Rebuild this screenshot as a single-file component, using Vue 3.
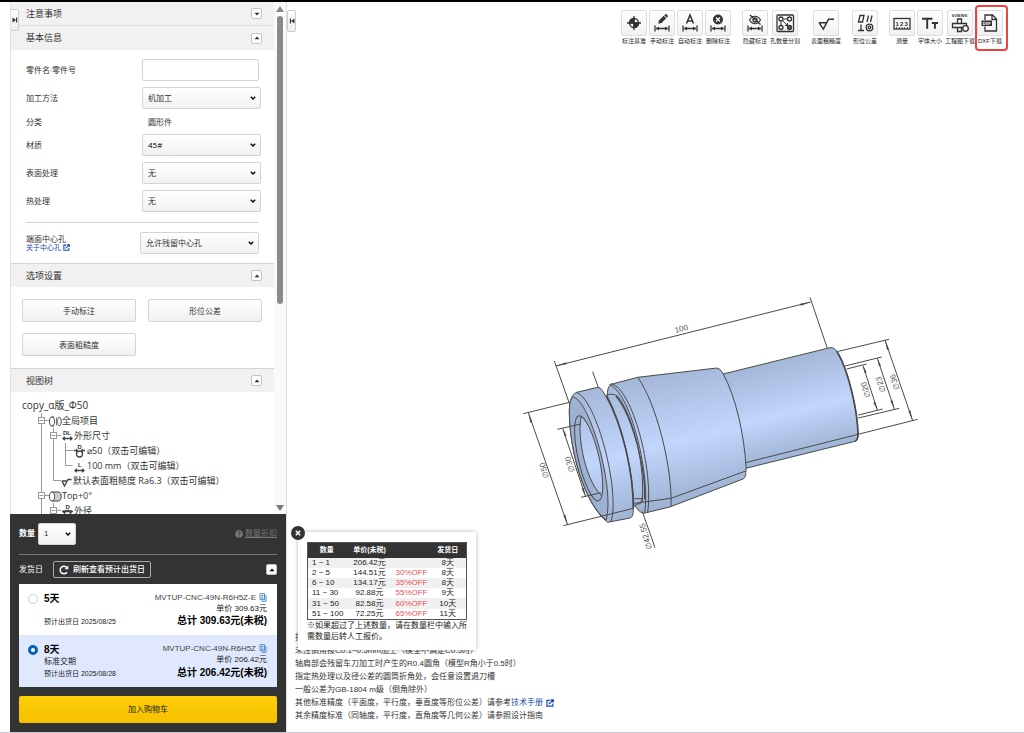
<script setup>
import { ref } from 'vue'

const part = ref('')
const method = ref('机加工')
const material = ref('45#')
const surface = ref('无')
const heat = ref('无')
const centerHole = ref('允许残留中心孔')
const qty = ref('1')
const delivery = ref('8')

const selects = [
  { id: 'material', label: '材质', model: material, dark: true },
  { id: 'surface', label: '表面处理', model: surface },
  { id: 'heat', label: '热处理', model: heat }
]

const toolGroups = [
  [
    { icon: 'datum', label: '标注基准' },
    { icon: 'pencil', label: '手动标注' },
    { icon: 'auto', label: '自动标注' },
    { icon: 'remove', label: '删除标注' }
  ],
  [
    { icon: 'hide', label: '隐藏标注' },
    { icon: 'holes', label: '孔数量分割' }
  ],
  [{ icon: 'rough', label: '表面粗糙度' }],
  [{ icon: 'geo', label: '形位公差' }],
  [
    { icon: 'measure', label: '测量' },
    { icon: 'font', label: '字体大小' },
    { icon: 'views', label: '工程图下载' },
    { icon: 'dxf', label: 'DXF下载', marked: true }
  ]
]

const tree = [
  { kind: 'global', gutter: 40, text: '全局项目' },
  { kind: 'size', gutter: 52, text: '外形尺寸' },
  { kind: 'dia', gutter: 65, text: '⌀50（双击可编辑）' },
  { kind: 'len', gutter: 65, text: '100 mm（双击可编辑）' },
  { kind: 'ra', gutter: 51, text: '默认表面粗糙度 Ra6.3（双击可编辑）' },
  { kind: 'top', gutter: 40, text: 'Top+0°' },
  { kind: 'outer', gutter: 52, text: '外径' }
]

const plans = [
  { id: '5', days: '5天', note: '', date: '2025/08/25', code: 'MVTUP-CNC-49N-R6H5Z-E', price: '309.63' },
  { id: '8', days: '8天', note: '标准交期', date: '2025/08/28', code: 'MVTUP-CNC-49N-R6H5Z', price: '206.42' }
]

const discounts = [
  ['1 ~ 1', '206.42元', '', '8天'],
  ['2 ~ 5', '144.51元', '30%OFF', '8天'],
  ['6 ~ 10', '134.17元', '35%OFF', '8天'],
  ['11 ~ 30', '92.88元', '55%OFF', '9天'],
  ['31 ~ 50', '82.58元', '60%OFF', '10天'],
  ['51 ~ 100', '72.25元', '65%OFF', '11天']
]
</script>

<template>
  <div class="page">
    <aside class="side">
      <div class="scroller">
        <div class="panels">
          <button class="edge-tab left" aria-label="展开">
            <svg viewBox="0 0 8 8" width="8" height="8"><path d="M1.5 1.5v5L5 4zM5 1.5h1.2v5H5z" fill="#333" /></svg>
          </button>
          <section>
            <h2 class="head"><span>注意事项</span>
              <button class="fold" aria-label="展开注意事项"><svg viewBox="0 0 8 8" width="8" height="8"><path d="M1.5 2.8h5L4 5.4z" fill="#333" /></svg></button>
            </h2>
          </section>
          <section>
            <h2 class="head"><span>基本信息</span>
              <button class="fold" aria-label="收起基本信息"><svg viewBox="0 0 8 8" width="8" height="8"><path d="M1.5 5.2h5L4 2.6z" fill="#333" /></svg></button>
            </h2>
            <div class="form">
              <div class="row">
                <label for="part">零件名·零件号</label>
                <input id="part" v-model="part" class="box text" type="text" />
              </div>
              <div class="row">
                <label for="method">加工方法</label>
                <span class="pick">
                  <select id="method" v-model="method" class="box"><option>机加工</option></select>
                  <svg viewBox="0 0 6 4" width="6" height="4"><path d="M.8.8 3 3 5.2.8" fill="none" stroke="#111" stroke-width="1.5" /></svg>
                </span>
              </div>
              <div class="row plain"><span class="name">分类</span><span class="value">圆形件</span></div>
              <div v-for="s in selects" :key="s.id" class="row">
                <label :for="s.id">{{ s.label }}</label>
                <span class="pick">
                  <select :id="s.id" class="box" :class="{ dark: s.dark }"><option>{{ s.model.value }}</option></select>
                  <svg viewBox="0 0 6 4" width="6" height="4"><path d="M.8.8 3 3 5.2.8" fill="none" stroke="#111" stroke-width="1.5" /></svg>
                </span>
              </div>
              <hr />
              <div class="row hole">
                <div class="stack">
                  <label for="hole">端面中心孔</label>
                  <a href="#">关于中心孔
                    <svg viewBox="0 0 8 8" width="7" height="7"><path d="M3.8 1.3H1v5.9h5.8V4.6M3 5l3.8-3.8M4.6.8h2.7v2.7" fill="none" stroke="currentColor" stroke-width="1.2" /></svg>
                  </a>
                </div>
                <span class="pick">
                  <select id="hole" v-model="centerHole" class="box"><option>允许残留中心孔</option></select>
                  <svg viewBox="0 0 6 4" width="6" height="4"><path d="M.8.8 3 3 5.2.8" fill="none" stroke="#111" stroke-width="1.5" /></svg>
                </span>
              </div>
            </div>
          </section>
          <section>
            <h2 class="head ruled"><span>选项设置</span>
              <button class="fold" aria-label="收起选项设置"><svg viewBox="0 0 8 8" width="8" height="8"><path d="M1.5 5.2h5L4 2.6z" fill="#333" /></svg></button>
            </h2>
            <div class="options">
              <button>手动标注</button>
              <button>形位公差</button>
              <button>表面粗糙度</button>
            </div>
          </section>
          <section>
            <h2 class="head ruled"><span>视图树</span>
              <button class="fold" aria-label="收起视图树"><svg viewBox="0 0 8 8" width="8" height="8"><path d="M1.5 5.2h5L4 2.6z" fill="#333" /></svg></button>
            </h2>
            <div class="tree">
              <p class="tree-name">copy_α版_Φ50</p>
              <ul>
                <li v-for="n in tree" :key="n.kind">
                  <svg :width="n.gutter" height="15" :viewBox="`22 0 ${n.gutter} 15`" fill="none" stroke="#444" stroke-width="1">
                    <g stroke="#999">
                      <path d="M41.5 0v15" />
                      <g v-if="n.kind === 'global' || n.kind === 'top'">
                        <path d="M45 7.5h4" /><rect x="38.5" y="4.5" width="6" height="6" fill="#fff" /><path d="M39.5 7.5h4" />
                      </g>
                      <g v-if="n.kind === 'size' || n.kind === 'outer'">
                        <path d="M53.5 0v15M57 7.5h4" /><rect x="50.5" y="4.5" width="6" height="6" fill="#fff" /><path d="M51.5 7.5h4" />
                      </g>
                      <path v-if="n.kind === 'dia'" d="M53.5 0v15M65.5 0v15M65.5 7.5h8" />
                      <path v-if="n.kind === 'len'" d="M53.5 0v15M65.5 0v7.5h7" />
                      <path v-if="n.kind === 'ra'" d="M53.5 0v7.5h8" />
                    </g>
                    <g v-if="n.kind === 'global'">
                      <ellipse cx="52" cy="8.5" rx="2.5" ry="4.5" /><path d="M52 4h2M52 13h2M59 4c3 1 3 8 0 9" />
                      <path d="M56.5 4.5v8M59 4c-2 2-2 7 0 9" stroke="#777" />
                    </g>
                    <g v-if="n.kind === 'top'">
                      <path d="M52 4h7c3 1 3 8 0 9h-7z" fill="#ccc" /><ellipse cx="52" cy="8.5" rx="2.5" ry="4.5" fill="#fff" />
                    </g>
                    <g v-if="n.kind === 'size'">
                      <path d="M63 10.5h9M64.8 8.7 63 10.5l1.8 1.8M70.2 8.7l1.8 1.8-1.8 1.8" stroke-width="1.3" />
                      <text x="63" y="7">DL</text>
                    </g>
                    <g v-if="n.kind === 'dia'">
                      <circle cx="79.5" cy="11" r="3" stroke-width="1.3" /><path d="M74 7.5h3M82 7.500h3" stroke-width="1.3" /><path d="m76 6 2 1.500-2 1.500M83 6l-2 1.500 2 1.500" />
                      <text x="77.500" y="6">D</text>
                    </g>
                    <g v-if="n.kind === 'len'">
                      <path d="M75 12.500h9M76.800 10.700 75 12.500l1.800 1.800M82.200 10.700l1.800 1.800-1.800 1.800" stroke-width="1.300" />
                      <text x="78" y="9">L</text>
                    </g>
                    <path v-if="n.kind === 'ra'" d="m62 8 2.500 5L68 6.500h3.500M62 8h4.500" stroke-width="1.300" />
                    <g v-if="n.kind === 'outer'">
                      <circle cx="67.500" cy="10.500" r="3" stroke-width="1.300" /><path d="M62 8.500h11M64 7v3M71 7v3" stroke-width="1.300" />
                      <text x="65.500" y="6">D</text>
                    </g>
                  </svg>
                  <span>{{ n.text }}</span>
                </li>
              </ul>
            </div>
          </section>
        </div>
        <div class="bar" aria-hidden="true">
          <svg viewBox="0 0 8 6" width="8" height="6"><path d="M4 0 8 6H0z" fill="#888" /></svg>
          <i></i>
          <svg viewBox="0 0 8 6" width="8" height="6"><path d="M4 6 8 0H0z" fill="#777" /></svg>
        </div>
      </div>

      <div class="order">
        <div class="qty">
          <label for="qty">数量</label>
          <span class="pick small">
            <select id="qty" v-model="qty" class="box"><option>1</option></select>
            <svg viewBox="0 0 6 4" width="6" height="4"><path d="M.8.8 3 3 5.2.8" fill="none" stroke="#111" stroke-width="1.5" /></svg>
          </span>
          <a href="#" class="rebate">
            <svg viewBox="0 0 8 8" width="8" height="8"><circle cx="4" cy="4" r="3.8" fill="#777" /><path d="M2.9 3.1c0-1.6 2.4-1.5 2.3 0C5.2 4 4 4 4 5M4 5.7v.9" fill="none" stroke="#333" stroke-width=".9" /></svg>
            <span>数量折扣</span>
          </a>
        </div>
        <div class="ship">
          <span>发货日</span>
          <button class="refresh">
            <svg viewBox="0 0 10 10" width="10" height="10"><path d="M8 7.3A3.8 3.8 0 1 1 7.7 2.4" fill="none" stroke="#fff" stroke-width="1.5" /><path d="M9.3.5v3.8H5.5z" fill="#fff" /></svg>
            刷新查看预计出货日
          </button>
          <button class="fold" aria-label="收起发货日"><svg viewBox="0 0 8 8" width="8" height="8"><path d="M1.5 5.2h5L4 2.6z" fill="#000" /></svg></button>
        </div>
        <div class="plans">
          <label v-for="p in plans" :key="p.id" class="plan" :class="{ on: delivery === p.id }">
            <input v-model="delivery" type="radio" name="delivery" :value="p.id" />
            <span class="when">
              <b>{{ p.days }}</b>
              <span v-if="p.note" class="std">{{ p.note }}</span>
              <small>预计出货日 {{ p.date }}</small>
            </span>
            <span class="cost">
              <span class="code">{{ p.code }}
                <svg viewBox="0 0 8 9" width="8" height="9"><path d="M1 .7h4.5v6H1zM2.3 2.500h2M2.300 4h2M2.300 5.300h2M7 2v6.300H2.500" fill="none" stroke="#3b82c4" stroke-width=".9" /></svg>
              </span>
              <span>单价 {{ p.price }}元</span>
              <b>总计 {{ p.price }}元(未税)</b>
            </span>
          </label>
        </div>
        <button class="cart">加入购物车</button>
      </div>
    </aside>

    <main class="stage">
      <header class="tools">
        <button class="edge-tab" aria-label="收起侧栏">
          <svg viewBox="0 0 8 8" width="8" height="8"><path d="M6.5 1.5v5L3 4zM1.8 1.5H3v5H1.8z" fill="#333" /></svg>
        </button>
        <div v-for="(g, i) in toolGroups" :key="i" class="group">
          <button v-for="t in g" :key="t.icon" class="tool" :class="{ marked: t.marked }">
            <span class="tile">
              <svg viewBox="0 0 26 26" width="26" height="26" fill="none" stroke="#333" stroke-width="1.3">
                <g v-if="t.icon === 'datum'">
                  <circle cx="13" cy="13" r="4.5" fill="#fff" /><path d="M13 6v14M6 13h14" />
                  <path d="M13 13V8.5A4.5 4.5 0 0 0 8.5 13zM13 13v4.5a4.5 4.5 0 0 0 4.5-4.5z" fill="#333" />
                </g>
                <g v-if="['pencil', 'auto', 'remove', 'hide'].includes(t.icon)">
                  <path d="M6 15.5v6M20 15.5v6M7 18.5h12" /><path d="m10 16.5-3 2 3 2zM16 16.5l3 2-3 2z" fill="#333" stroke="none" />
                </g>
                <path v-if="t.icon === 'pencil'" d="m9.200 13.800.8-3.300 4.700-4.700 2.500 2.500-4.700 4.700zM15.300 5.200l.9-.9q.6-.5 1.200 0l1.300 1.300q.5.600 0 1.200l-.9.9z" fill="#333" stroke="none" />
                <path v-if="t.icon === 'auto'" d="M9.500 13.500 13 5l3.500 8.500M10.700 11h4.600" stroke-width="1.500" />
                <g v-if="t.icon === 'remove'"><circle cx="13" cy="9.500" r="5" fill="#333" stroke="none" /><path d="m11 7.500 4 4m0-4-4 4" stroke="#fff" /></g>
                <g v-if="t.icon === 'hide'"><path d="M7.500 10c3-5 8-5 11 0-3 5-8 5-11 0zM8 5l10.500 9.500" stroke-width="1.200" /><circle cx="13" cy="10" r="2" /></g>
                <g v-if="t.icon === 'holes'">
                  <rect x="5" y="5" width="16.500" height="16.500" rx="1" /><circle cx="9" cy="9" r="2" /><circle cx="17.500" cy="9" r="2" /><circle cx="9" cy="17.500" r="2" /><circle cx="17.500" cy="17.500" r="2" fill="#666" />
                  <path d="M11.500 9h3.500M9 11.500V15M11 11l4.500 4.500M13 15.500h2.500V13" stroke-width="1" />
                </g>
                <path v-if="t.icon === 'rough'" d="m6 12.700 4.300 6.500 5.200-9.900H21M6 12.700h7.500" stroke-width="1.400" />
                <g v-if="t.icon === 'geo'">
                  <path d="M8 5.500h4L10.500 12H6.500zM15 12l1.500-6.500M18.500 12 20 5.500M6 20.500h6M9 14.500v6" /><circle cx="17.500" cy="17.500" r="3.300" /><circle cx="17.500" cy="17.500" r="1.300" />
                </g>
                <g v-if="t.icon === 'measure'">
                  <rect x="5" y="8.500" width="16" height="10.500" /><path d="M7.500 19v-2M10.300 19v-2M13 19v-2M15.700 19v-2M18.500 19v-2" stroke-width=".8" />
                  <text x="6.500" y="15.500" font-size="6">1</text><text x="11" y="15.500" font-size="6">2</text><text x="15.500" y="15.500" font-size="6">3</text>
                </g>
                <g v-if="t.icon === 'font'" stroke-width="1.900"><path d="M5 8.800h10.500M10.200 8.800v10M14.800 13h6.200M17.900 13v5.800" /></g>
                <g v-if="t.icon === 'views'">
                  <path d="M10.500 9h4v4.500h5v4h-5v4h-4v-4h-5v-4h5zM10.500 13.500h4M10.500 17.500h4" /><circle cx="18.500" cy="18.500" r="2.800" fill="#f7f7f7" />
                  <text x="5" y="7" font-size="4">6VIEWS</text>
                </g>
                <g v-if="t.icon === 'dxf'">
                  <path d="M8 10V5h7.500l4 4v12H8v-4.500M15 5v4.500h4.500" /><rect x="4.500" y="10.500" width="10.500" height="5.500" fill="#333" stroke="none" />
                  <text x="5.700" y="15" font-size="4" class="inv">DXF</text>
                </g>
              </svg>
            </span>
            <span class="cap">{{ t.label }}</span>
          </button>
        </div>
      </header>

      <svg class="model" viewBox="-684 -720 2211 1743" fill="none" stroke="#4a4a48" stroke-width="3" stroke-linejoin="round">
        <defs>
          <linearGradient id="gTube" gradientUnits="userSpaceOnUse" x1="790" y1="213" x2="860" y2="495">
            <stop offset="0" stop-color="#a3b7d9" /><stop offset=".55" stop-color="#c2d6fd" /><stop offset="1" stop-color="#9fb3d4" />
          </linearGradient>
          <linearGradient id="gCone" gradientUnits="userSpaceOnUse" x1="470" y1="245" x2="560" y2="615">
            <stop offset="0" stop-color="#a5b8da" /><stop offset=".55" stop-color="#c2d6fd" /><stop offset="1" stop-color="#9fb3d4" />
          </linearGradient>
          <linearGradient id="gRing" gradientUnits="userSpaceOnUse" x1="225" y1="295" x2="320" y2="690">
            <stop offset="0" stop-color="#a5b8da" /><stop offset=".55" stop-color="#c2d6fd" /><stop offset="1" stop-color="#9fb3d4" />
          </linearGradient>
          <clipPath id="bore"><ellipse cx="221" cy="505" rx="31" ry="131" transform="rotate(-13 221 505)" /></clipPath>
        </defs>
        <path d="M600 258 945 173q12-2 20 10c35 55 63 180 64 250 0 12-3 19-9 21L692 535z" fill="url(#gTube)" />
        <path d="M965 183c35 55 63 180 64 250 0 12-3 19-9 21" stroke-width="5" />
        <path d="M368 262 605 234q10 0 18 15c40 70 65 190 70 280 0 20 0 34-9 38L467 650 340 500z" fill="url(#gCone)" />
        <path d="M277 315c0-20 5-31 18-34l73-19c55 75 105 270 100 388l-82 20c-12-3-22-15-28-26z" fill="url(#gCone)" />
        <path d="M282 284c60 15 125 260 107 384M288 281c65 15 128 260 110 386" />
        <path d="M275 315c20-6 35 0 45 20 45 80 68 200 62 298l-24 15z" fill="url(#gRing)" />
        <path d="M303 318c50 60 90 220 86 310" stroke-width="4" />
        <path d="M358 626h24q0 12-10 18" />
        <path d="m185 307 63-15q8 0 14 10c55 80 97 250 93 355 0 15-2 24-10 27l-67 13C215 650 165 500 163 370c0-35 5-55 22-63z" fill="url(#gRing)" />
        <path d="M275 318c48 90 80 230 80 338" stroke-width="5" />
        <path d="M163 370c0-30 3-47 13-48 48 10 125 275 97 368C210 640 165 490 163 370z" fill="#9db1d2" />
        <path d="M184 307c62 22 132 300 104 388" />
        <path d="M200 375c-18 60 15 215 68 248l40-100-80-160z" clip-path="url(#bore)" fill="url(#gRing)" />
        <ellipse cx="221" cy="505" rx="31" ry="131" transform="rotate(-13 221 505)" />
        <path d="m358 640 110-15 224-82M692 518l337-85" />
        <g class="dims">
          <path d="m118 213 45 127M122 228 887 36M885 22l52 153M233 245l17 48" />
          <path d="m25 371 138-34M40 368l118 337M145 707l210-52" />
          <path d="m127 418 70-16M143 415l69 205M198 622l60-14" />
          <path d="m382 665 38 108" />
          <path d="m970 184 152-36M1110 150l83 242M1029 433l179-45" />
          <path d="m990 228 110-27M1087 205l51 152M1030 384l123-29" />
          <path d="m995 237 60-15M1044 227l43 133M1030 375l73-18" />
        </g>
        <g fill="#4a4a48" stroke="none">
          <path d="m122 228 31-11 2 6zM887 36l-31 5 2 6zM40 368l6 30 6-2zM158 705l-13-29 6-2zM143 415l6 24 6-2zM212 620l-12-24 6-2zM1110 150l6 30 6-2zM1193 392l-13-29 6-2zM1087 205l5 24 6-2zM1138 357l-12-24 6-2zM1044 227l5 22 6-2zM1087 360l-12-22 6-2z" />
        </g>
        <g class="marks">
          <text transform="translate(501 124) rotate(-14)">100</text>
          <text transform="translate(95 539) rotate(-107)">∅50</text>
          <text transform="translate(172 521) rotate(-107)">∅30</text>
          <text transform="translate(400 737) rotate(-107)">∅42.55</text>
          <text transform="translate(1060 297) rotate(-107)">∅20</text>
          <text transform="translate(1105 281) rotate(-107)">∅23</text>
          <text transform="translate(1147 274) rotate(-107)">∅36</text>
        </g>
      </svg>

      <div class="foot">
        <div class="notes">
          <p>指定</p>
          <p>未注倒角按C0.1~0.5mm加工（模型不满足C0.5时）</p>
          <p>轴肩部会残留车刀加工时产生的R0.4圆角（模型R角小于0.5时）</p>
          <p>指定热处理以及径公差的圆筒折角处，会任意设置退刀槽</p>
          <p>一般公差为GB-1804 m级（倒角除外）</p>
          <p>其他标准精度（平面度，平行度，垂直度等形位公差）请参考<a href="#">技术手册
            <svg viewBox="0 0 8 8" width="8" height="8"><path d="M3.8 1.3H1v5.9h5.800V4.600M3 5l3.800-3.800M4.600.8h2.700v2.700" fill="none" stroke="currentColor" stroke-width="1.200" /></svg></a></p>
          <p>其余精度标准（同轴度，平行度，直角度等几何公差）请参照设计指南</p>
        </div>
        <div class="popup">
          <button class="close" aria-label="关闭"><svg viewBox="0 0 14 14" width="14" height="14"><circle cx="7" cy="7" r="7" fill="#333" /><path d="m4.800 4.800 4.400 4.400m0-4.400L4.800 9.200" stroke="#fff" stroke-width="1.500" /></svg></button>
          <table>
            <thead><tr><th>数量</th><th>单价(未税)</th><th></th><th>发货日</th></tr></thead>
            <tbody>
              <tr v-for="d in discounts" :key="d[0]"><td>{{ d[0] }}</td><td>{{ d[1] }}</td><td class="off">{{ d[2] }}</td><td>{{ d[3] }}</td></tr>
            </tbody>
          </table>
          <p>※如果超过了上述数量，请在数量栏中输入所需数量后转人工报价。</p>
        </div>
      </div>
    </main>
  </div>
</template>

<style>
body { background: #fff; }
</style>

<style scoped>
* { box-sizing: border-box; margin: 0; padding: 0; }
.page {
  display: grid;
  grid-template-columns: 277px 1fr;
  height: 100vh;
  padding-left: 10px;
  border-top: 2px solid #000;
  border-bottom: 1px solid #c6c9d2;
  font: 8px/12px "Liberation Sans", "Noto Sans CJK SC", sans-serif;
  color: #333;
}
button, input, select { font: inherit; color: inherit; border: 0; background: none; }
svg { display: block; flex: none; }
a { color: #1347b0; }
.side { display: flex; flex-direction: column; min-height: 0; border-right: 1px solid #ddd; }
.scroller { display: flex; flex: 1; min-height: 0; overflow: hidden; border-left: 1px solid #e2e2e2; font-family: "Open Sans", "Noto Sans CJK SC", sans-serif; }
.panels { position: relative; flex: 1; overflow: hidden; }
.edge-tab {
  display: flex; align-items: center; justify-content: center;
  width: 9px; height: 22px; margin-right: auto;
  border: 1px solid #ccc; border-radius: 2px;
  background: linear-gradient(#fff, #eee);
}
.edge-tab.left { position: absolute; left: -1px; top: 7px; }
.head {
  display: flex; align-items: center; justify-content: space-between;
  height: 24px; padding: 0 12px 0 15px;
  background: #f1f1f1; border-bottom: 1px solid #ddd;
  font-size: 9px; font-weight: 400;
}
.head.ruled { border-top: 1px solid #d4d4d4; border-bottom: 0; }
.form { padding: 9px 15px 9px; }
section:nth-of-type(2) .head { border-bottom: 0; }
.fold {
  display: flex; align-items: center; justify-content: center;
  width: 11px; height: 11px;
  border: 1px solid #c4c4c4; border-radius: 2px; background: #fff;
}
.row { display: flex; align-items: center; margin-bottom: 6px; }
.row > label, .name { width: 116px; flex: none; }
.row.plain { height: 13px; }
.value { padding-left: 6px; }
.box {
  height: 22px; width: 100%; padding: 0 5px;
  border: 1px solid #d4d4d4; border-radius: 2px;
  background: linear-gradient(#fff, #f1f1f1);
  appearance: none;
}
.box.text { width: 117px; background: #fff; }
.box.dark { color: #000; }
.pick { display: grid; flex: none; width: 119px; align-items: center; }
.pick > * { grid-area: 1 / 1; }
.pick > svg { justify-self: end; margin-right: 5px; pointer-events: none; }
hr { border: 0; border-top: 1px solid #d4d4d4; margin: 10px 0 9px; }
.row.hole { margin: 0; }
.stack { display: flex; flex-direction: column; width: 114px; line-height: 9px; }
.stack a { display: flex; gap: 2px; align-items: center; font-size: 7px; text-decoration: none; }
.options { display: grid; grid-template-columns: 1fr 1fr; gap: 11px 12px; padding: 12px 12px 12px 11px; }
.options button { height: 23px; border: 1px solid #d4d4d4; border-radius: 2px; background: linear-gradient(#fff, #f1f1f1); }
.tree { padding: 6px 0 0 11px; }
.tree-name { font-size: 10px; line-height: 15px; }
.tree ul { list-style: none; }
.tree li { display: flex; height: 15px; font-size: 9px; line-height: 15px; white-space: nowrap; }
.tree text { font: bold 6px "Liberation Sans", sans-serif; fill: #333; stroke: none; }
.bar { display: flex; flex-direction: column; align-items: center; width: 12px; padding: 4px 0 3px; background: #fafafa; }
.bar i { width: 6px; height: 57%; margin: 4px 0 auto; border-radius: 3px; background: #8a8a8a; }

.order { padding: 9px; background: #333; color: #fff; }
.qty { display: flex; align-items: center; gap: 3px; padding-bottom: 9px; border-bottom: 1px solid #777; }
.qty label { font-weight: 700; }
.pick.small { width: 38px; color: #333; }
.rebate { display: flex; align-items: center; gap: 2px; margin-left: auto; color: #777; }
.ship { display: flex; align-items: center; padding: 6px 0; }
.refresh {
  display: flex; align-items: center; gap: 4px;
  height: 17px; margin: 0 auto 0 10px; padding: 0 5px;
  border: 1px solid #aaa; border-radius: 2px; font-weight: 500;
}
.plan {
  display: flex; min-height: 51px; padding: 8px 10px 7px 9px;
  background: #fff; color: #222;
}
.plan.on { min-height: 52px; background: #dfe8fd; }
.plan input { appearance: none; width: 10px; height: 10px; margin: 2px 6px 0 0; border: 1px solid #ccc; border-radius: 50%; background: #fff; }
.plan input:checked { border: 3px solid #0860b8; }
.when, .cost { display: flex; flex-direction: column; line-height: 11px; }
.when b { font-size: 10px; line-height: 13px; color: #000; }
.when small { margin-top: auto; font-size: 7px; line-height: 12px; }
.cost { margin-left: auto; align-items: flex-end; }
.cost b { margin-top: auto; font-size: 10px; line-height: 14px; color: #000; }
.code { display: flex; align-items: center; gap: 3px; color: #444; }
.cart { display: block; width: 100%; height: 27px; margin-top: 9px; border-radius: 2px; background: linear-gradient(#ffce08, #f5c000); color: #222; }

.stage { display: flex; flex-direction: column; min-width: 0; min-height: 0; }
.tools { display: flex; gap: 11px; align-items: flex-start; height: 48px; padding: 8px 21px 0 0; }
.group { display: flex; gap: 2px; }
.tool { position: relative; display: flex; flex-direction: column; align-items: center; }
.tile { width: 26px; height: 26px; border: 1px solid #ddd; border-radius: 2px; background: linear-gradient(#fff, #f1f1f1); }
.tile svg { margin: -1px; }
.tile text { font-family: "Liberation Sans", sans-serif; font-weight: 700; fill: #333; stroke: none; }
.tile .inv { fill: #fff; }
.cap { font-size: 6px; line-height: 10px; white-space: nowrap; color: #222; }
.marked::after { content: ""; position: absolute; inset: -5px -5px -5px -2px; border: 2px solid #f0433a; border-radius: 4px; }
.model { flex: 1; width: 100%; min-height: 0; }
.dims { stroke-width: 3; }
.marks text { font: 24px "Liberation Sans", "DejaVu Sans", sans-serif; fill: #555; stroke: none; text-anchor: middle; }
.foot { position: relative; padding: 0 8px 10px; }
.notes p { line-height: 13px; }
.notes a { display: inline-flex; align-items: center; gap: 3px; text-decoration: none; line-height: 12px; }
.popup { position: absolute; left: 11px; bottom: 82px; width: 178px; padding: 10px 9px 8px; background: #fff; box-shadow: 0 0 4px rgba(0, 0, 0, .3); }
.popup p { line-height: 11px; color: #222; }
.close { position: absolute; left: -7px; top: -6px; }
table { width: 100%; height: 78px; table-layout: fixed; border-collapse: collapse; border: 1px solid #555; color: #222; line-height: 10px; text-align: center; }
th { height: 15px; background: #333; color: #fff; font-size: 7px; }
th:nth-child(1) { width: 38px; }
th:nth-child(2) { width: 48px; }
th:nth-child(3) { width: 36px; }
td:first-child { text-align: left; padding-left: 4px; white-space: nowrap; }
tbody tr:nth-child(odd) { background: #f0f0f0; }
.off { color: #e8525a; }
</style>
